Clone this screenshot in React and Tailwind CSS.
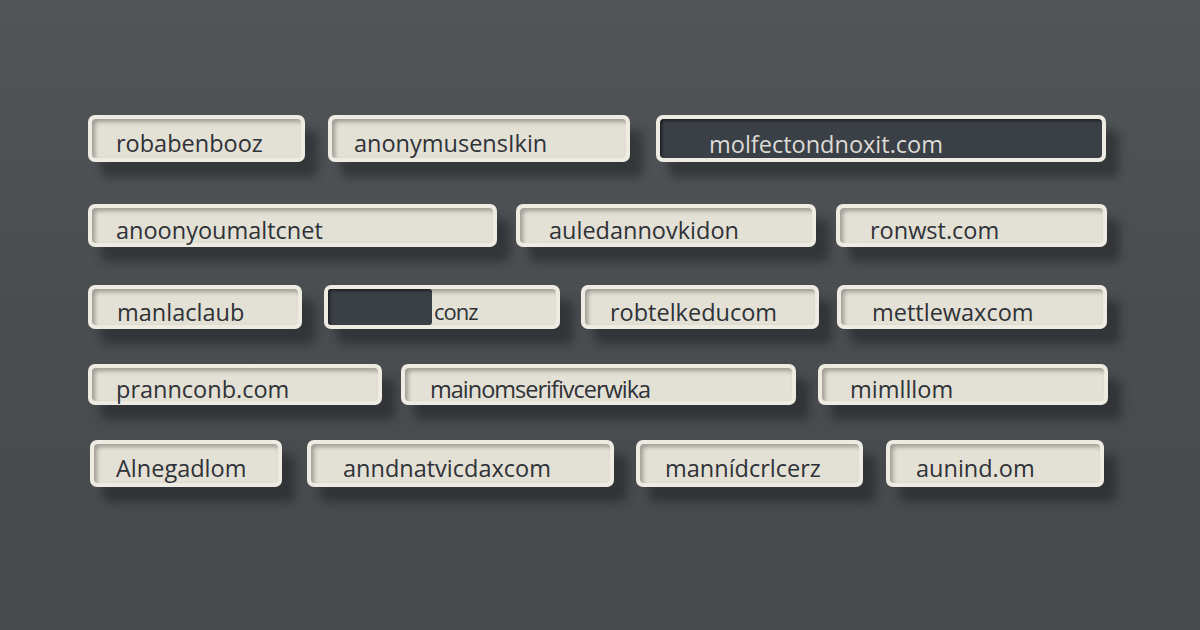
import React from "react";

const rows = [
  {
    h: "h-[47px]",
    items: [
      { w: "w-[217px]", ml: "ml-0", text: "robabenbooz", pl: "pl-[24px]" },
      { w: "w-[302px]", ml: "ml-[23px]", text: "anonymusensIkin", pl: "pl-[22px]" },
      { w: "w-[450px]", ml: "ml-[26px]", text: "molfectondnoxit.com", pl: "pl-[49px]", dark: true },
    ],
  },
  {
    h: "h-[43px]",
    items: [
      { w: "w-[409px]", ml: "ml-0", text: "anoonyoumaltcnet", pl: "pl-[24px]" },
      { w: "w-[300px]", ml: "ml-[19px]", text: "auledannovkidon", pl: "pl-[29px]" },
      { w: "w-[271px]", ml: "ml-[20px]", text: "ronwst.com", pl: "pl-[30px]" },
    ],
  },
  {
    h: "h-[44px]",
    items: [
      { w: "w-[214px]", ml: "ml-0", text: "manlaclaub", pl: "pl-[25px]" },
      { w: "w-[236px]", ml: "ml-[22px]", text: "conz", split: true },
      { w: "w-[238px]", ml: "ml-[21px]", text: "robtelkeducom", pl: "pl-[25px]" },
      { w: "w-[270px]", ml: "ml-[18px]", text: "mettlewaxcom", pl: "pl-[31px]" },
    ],
  },
  {
    h: "h-[41px]",
    items: [
      { w: "w-[294px]", ml: "ml-0", text: "prannconb.com", pl: "pl-[24px]" },
      { w: "w-[395px]", ml: "ml-[19px]", text: "mainomserifivcerwika", pl: "pl-[25px]", tight: true },
      { w: "w-[290px]", ml: "ml-[22px]", text: "mimlllom", pl: "pl-[28px]" },
    ],
  },
  {
    h: "h-[47px]",
    items: [
      { w: "w-[192px]", ml: "ml-[2px]", text: "Alnegadlom", pl: "pl-[22px]" },
      { w: "w-[307px]", ml: "ml-[25px]", text: "anndnatvicdaxcom", pl: "pl-[32px]" },
      { w: "w-[227px]", ml: "ml-[22px]", text: "mannídcrlcerz", pl: "pl-[25px]" },
      { w: "w-[218px]", ml: "ml-[23px]", text: "aunind.om", pl: "pl-[26px]" },
    ],
  },
];

function Field({ item, h }) {
  return (
    <div
      className={`${item.w} ${item.ml} ${h} shrink-0 rounded-[7px] bg-[#eeebe3] p-[4px] shadow-[13px_15px_10px_rgba(22,24,27,0.45)]`}
    >
      {item.dark ? (
        <div className="h-full rounded-[4px] bg-[#3b4047] shadow-[inset_2px_2px_3px_rgba(0,0,0,0.5)] flex items-center pt-[13px]">
          <span className={`${item.pl} text-[23.5px] leading-none text-[#dddbd5] whitespace-nowrap`}>{item.text}</span>
        </div>
      ) : item.split ? (
        <div className="h-full rounded-[4px] bg-[#e3e0d6] shadow-[inset_3px_3px_4px_rgba(0,0,0,0.3)] flex items-center">
          <div className="w-[104px] h-full rounded-[3px] bg-[#3b4047] shadow-[inset_2px_2px_3px_rgba(0,0,0,0.5)]" />
          <span className="pl-[2px] text-[22px] leading-none tracking-[-1px] text-[#2f3236] pt-[7px]">{item.text}</span>
        </div>
      ) : (
        <div className="h-full rounded-[4px] bg-[#e3e0d6] shadow-[inset_3px_3px_4px_rgba(0,0,0,0.3)] flex items-center pt-[11px]">
          <span
            className={`${item.pl} text-[23.5px] leading-none ${item.tight ? "tracking-[-1px]" : "tracking-[0px]"} text-[#2f3236] whitespace-nowrap`}
          >
            {item.text}
          </span>
        </div>
      )}
    </div>
  );
}

export default function App() {
  return (
    <div
      className="w-[1200px] h-[630px] overflow-hidden bg-gradient-to-b from-[#525558] via-[#4a4d50] to-[#47494c] pl-[88px] pt-[115px]"
      style={{ fontFamily: '"Open Sans", "DejaVu Sans", sans-serif' }}
    >
      <div className="flex flex-col">
        <div className="flex">
          {rows[0].items.map((it) => (
            <Field key={it.text} item={it} h={rows[0].h} />
          ))}
        </div>
        <div className="flex mt-[42px]">
          {rows[1].items.map((it) => (
            <Field key={it.text} item={it} h={rows[1].h} />
          ))}
        </div>
        <div className="flex mt-[38px]">
          {rows[2].items.map((it) => (
            <Field key={it.text} item={it} h={rows[2].h} />
          ))}
        </div>
        <div className="flex mt-[35px]">
          {rows[3].items.map((it) => (
            <Field key={it.text} item={it} h={rows[3].h} />
          ))}
        </div>
        <div className="flex mt-[35px]">
          {rows[4].items.map((it) => (
            <Field key={it.text} item={it} h={rows[4].h} />
          ))}
        </div>
      </div>
    </div>
  );
}
